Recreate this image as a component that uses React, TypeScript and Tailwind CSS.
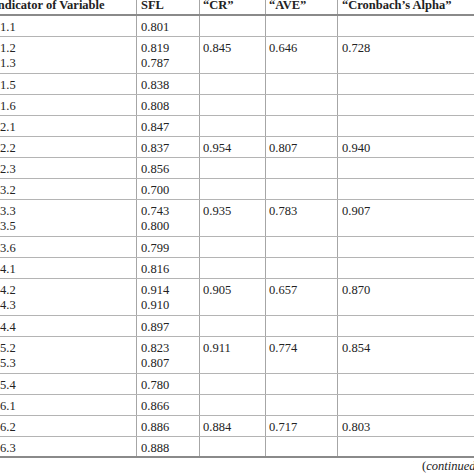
const rows = [
  { ind: ["1.1"], sfl: ["0.801"] },
  { ind: ["1.2", "1.3"], sfl: ["0.819", "0.787"], cr: "0.845", ave: "0.646", alpha: "0.728" },
  { ind: ["1.5"], sfl: ["0.838"] },
  { ind: ["1.6"], sfl: ["0.808"] },
  { ind: ["2.1"], sfl: ["0.847"] },
  { ind: ["2.2"], sfl: ["0.837"], cr: "0.954", ave: "0.807", alpha: "0.940" },
  { ind: ["2.3"], sfl: ["0.856"] },
  { ind: ["3.2"], sfl: ["0.700"] },
  { ind: ["3.3", "3.5"], sfl: ["0.743", "0.800"], cr: "0.935", ave: "0.783", alpha: "0.907" },
  { ind: ["3.6"], sfl: ["0.799"] },
  { ind: ["4.1"], sfl: ["0.816"] },
  { ind: ["4.2", "4.3"], sfl: ["0.914", "0.910"], cr: "0.905", ave: "0.657", alpha: "0.870" },
  { ind: ["4.4"], sfl: ["0.897"] },
  { ind: ["5.2", "5.3"], sfl: ["0.823", "0.807"], cr: "0.911", ave: "0.774", alpha: "0.854" },
  { ind: ["5.4"], sfl: ["0.780"] },
  { ind: ["6.1"], sfl: ["0.866"] },
  { ind: ["6.2"], sfl: ["0.886"], cr: "0.884", ave: "0.717", alpha: "0.803" },
  { ind: ["6.3"], sfl: ["0.888"] },
];

const App = () => {
  return (
    <div
      className="w-[474px] h-[474px] overflow-hidden bg-white text-[#222] text-[12.5px] leading-[15px]"
      style={{ fontFamily: '"Liberation Serif", "Times New Roman", serif' }}
    >
      <div className="w-[540px]">
        {/* Header */}
        <div className="-mt-[6px] h-[22px] grid grid-cols-[137px_63px_66px_72px_202px] border-b-2 border-[#8a8a8a] font-bold">
          <div className="pt-[4px] border-r border-[#a6a6a6] whitespace-nowrap">
            <span className="-ml-[7px]">Indicator of Variable</span>
          </div>
          <div className="pt-[4px] pl-[4px] border-r border-[#a6a6a6]">SFL</div>
          <div className="pt-[4px] pl-[3px] border-r border-[#a6a6a6]">“CR”</div>
          <div className="pt-[4px] pl-[3px] border-r border-[#a6a6a6]">“AVE”</div>
          <div className="pt-[4px] pl-[4px] whitespace-nowrap">“Cronbach’s Alpha”</div>
        </div>

        {/* Body */}
        {rows.map((row, i) => {
          const last = i === rows.length - 1;
          return (
            <div
              key={i}
              className={`grid grid-cols-[137px_63px_66px_72px_202px] ${
                row.ind.length > 1 ? "h-[37px]" : "h-[21px]"
              } ${last ? "border-b-2 border-[#8a8a8a]" : "border-b border-[#b4b4b4]"}`}
            >
              <div className="pt-[4px] border-r border-[#a6a6a6]">
                {row.ind.map((t) => (
                  <div key={t}>{t}</div>
                ))}
              </div>
              <div className="pt-[4px] pl-[4px] border-r border-[#a6a6a6]">
                {row.sfl.map((t) => (
                  <div key={t}>{t}</div>
                ))}
              </div>
              <div className="pt-[4px] pl-[3px] border-r border-[#a6a6a6]">{row.cr}</div>
              <div className="pt-[4px] pl-[3px] border-r border-[#a6a6a6]">{row.ave}</div>
              <div className="pt-[4px] pl-[4px]">{row.alpha}</div>
            </div>
          );
        })}

        <div className="mt-[1px] pl-[422px] whitespace-nowrap">
          (<span className="italic">continued</span>)
        </div>
      </div>
    </div>
  );
};

export default App;
